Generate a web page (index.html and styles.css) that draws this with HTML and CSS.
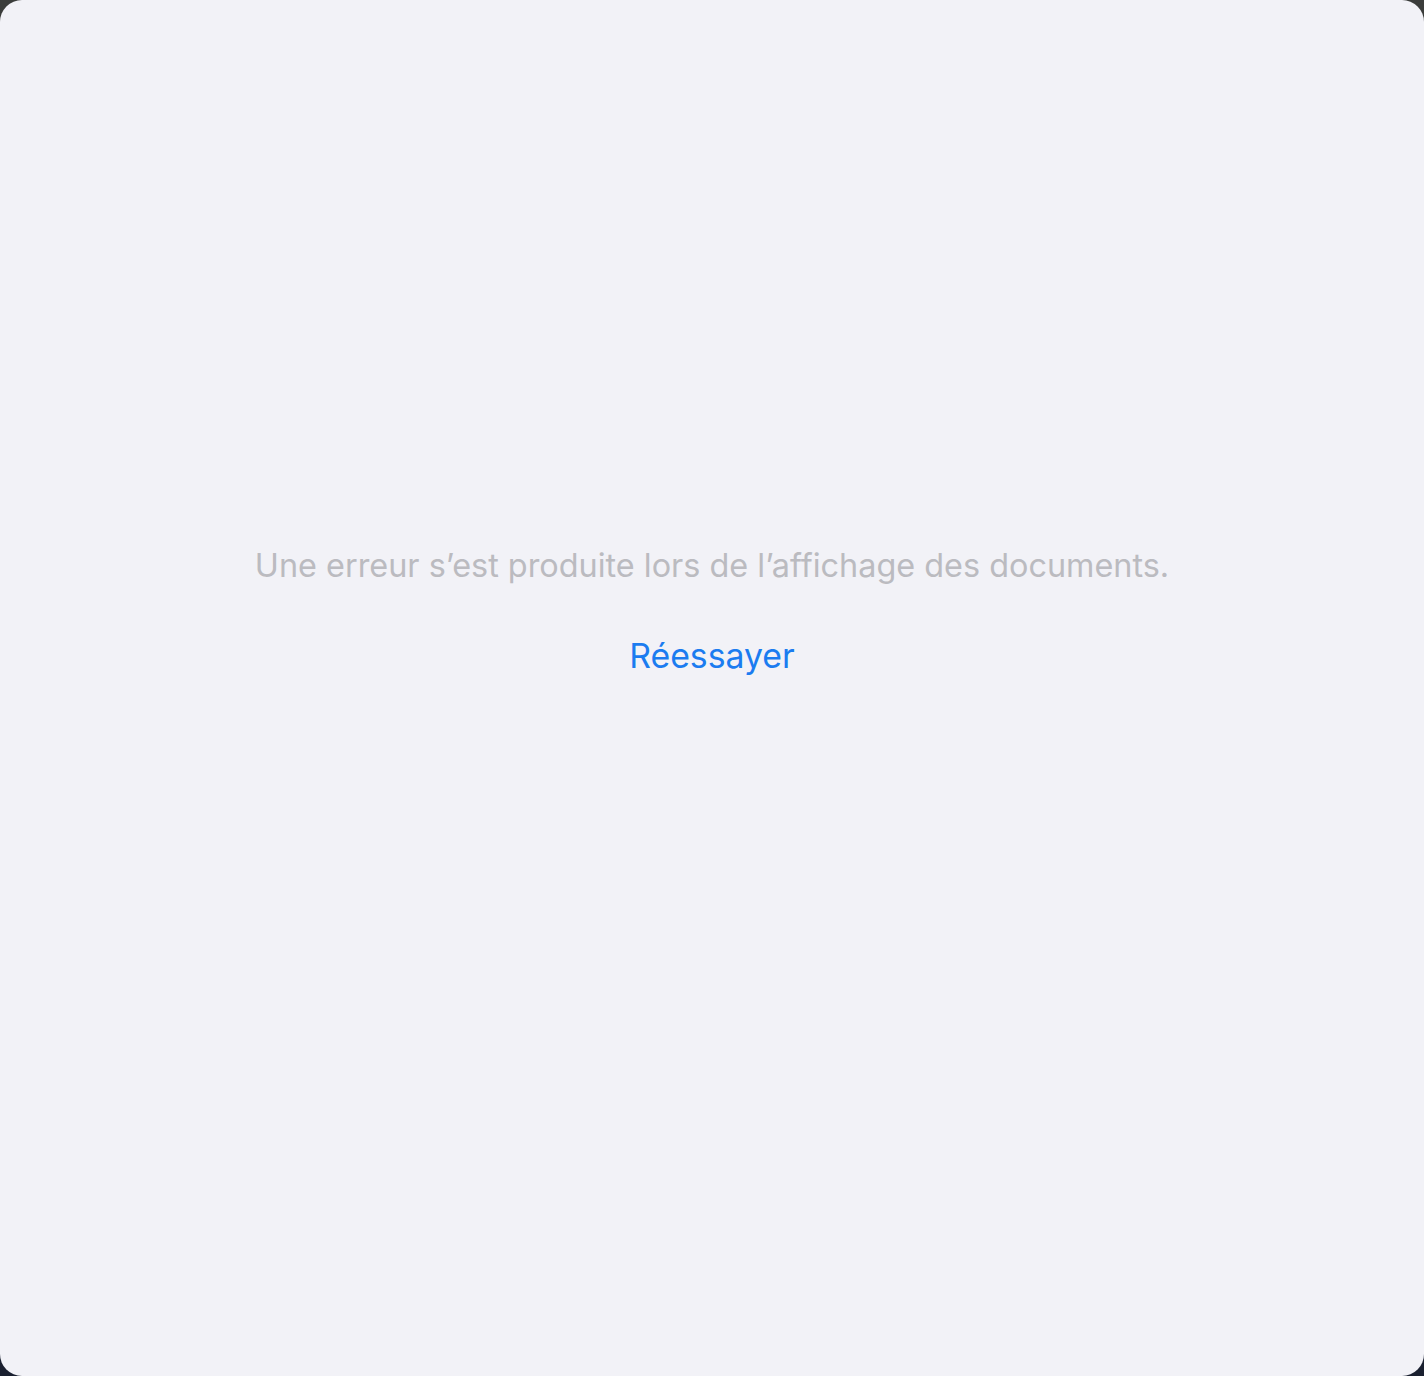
FILE: index.html
```html
<!DOCTYPE html>
<html lang="fr">
<head>
<meta charset="utf-8">
<title>Documents</title>
<link rel="stylesheet" href="styles.css">
</head>
<body>
<main class="sheet">
  <div class="error">
    <p class="message">Une erreur s’est produite lors de l’affichage des documents.</p>
    <button class="retry" type="button">Réessayer</button>
  </div>
</main>
</body>
</html>
```

FILE: styles.css
```css
html, body {
  margin: 0;
  padding: 0;
  height: 100%;
}
body {
  background: linear-gradient(to bottom, #3b3d3b 0%, #2c3034 50%, #1a2030 100%);
  font-family: Inter, "Noto Sans", "Liberation Sans", sans-serif;
}
.sheet {
  box-sizing: border-box;
  width: 1424px;
  height: 1376px;
  background: #f2f2f7;
  border-radius: 22px;
  display: flex;
  flex-direction: column;
  align-items: center;
  padding-top: 544px;
}
.error {
  display: flex;
  flex-direction: column;
  align-items: center;
  gap: 46px;
}
.message {
  margin: 0;
  font-size: 32.4px;
  line-height: 44px;
  color: #bbbbc0;
}
.retry {
  margin: 0;
  padding: 0;
  border: none;
  background: none;
  font-family: inherit;
  font-size: 33.8px;
  line-height: 44px;
  color: #1b7cf0;
  cursor: pointer;
}
```
